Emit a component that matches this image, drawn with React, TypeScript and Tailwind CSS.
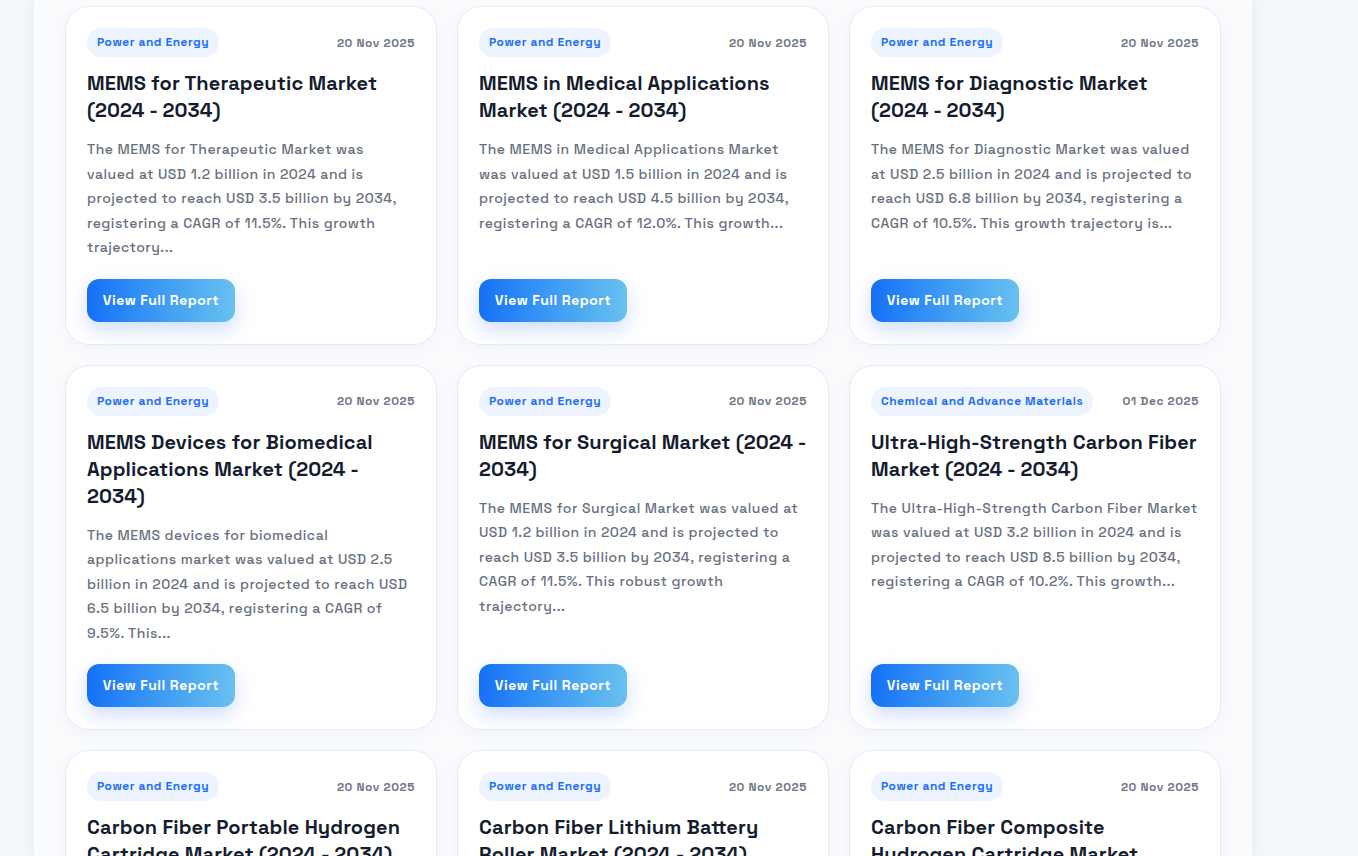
import React from "react";

type Report = {
  tag: string;
  date: string;
  title: string;
  desc: string;
};

const reports: Report[] = [
  {
    tag: "Power and Energy",
    date: "20 Nov 2025",
    title: "MEMS for Therapeutic Market (2024 - 2034)",
    desc: "The MEMS for Therapeutic Market was valued at USD 1.2 billion in 2024 and is projected to reach USD 3.5 billion by 2034, registering a CAGR of 11.5%. This growth trajectory...",
  },
  {
    tag: "Power and Energy",
    date: "20 Nov 2025",
    title: "MEMS in Medical Applications Market (2024 - 2034)",
    desc: "The MEMS in Medical Applications Market was valued at USD 1.5 billion in 2024 and is projected to reach USD 4.5 billion by 2034, registering a CAGR of 12.0%. This growth...",
  },
  {
    tag: "Power and Energy",
    date: "20 Nov 2025",
    title: "MEMS for Diagnostic Market (2024 - 2034)",
    desc: "The MEMS for Diagnostic Market was valued at USD 2.5 billion in 2024 and is projected to reach USD 6.8 billion by 2034, registering a CAGR of 10.5%. This growth trajectory is...",
  },
  {
    tag: "Power and Energy",
    date: "20 Nov 2025",
    title: "MEMS Devices for Biomedical Applications Market (2024 - 2034)",
    desc: "The MEMS devices for biomedical applications market was valued at USD 2.5 billion in 2024 and is projected to reach USD 6.5 billion by 2034, registering a CAGR of 9.5%. This...",
  },
  {
    tag: "Power and Energy",
    date: "20 Nov 2025",
    title: "MEMS for Surgical Market (2024 - 2034)",
    desc: "The MEMS for Surgical Market was valued at USD 1.2 billion in 2024 and is projected to reach USD 3.5 billion by 2034, registering a CAGR of 11.5%. This robust growth trajectory...",
  },
  {
    tag: "Chemical and Advance Materials",
    date: "01 Dec 2025",
    title: "Ultra-High-Strength Carbon Fiber Market (2024 - 2034)",
    desc: "The Ultra-High-Strength Carbon Fiber Market was valued at USD 3.2 billion in 2024 and is projected to reach USD 8.5 billion by 2034, registering a CAGR of 10.2%. This growth...",
  },
  {
    tag: "Power and Energy",
    date: "20 Nov 2025",
    title: "Carbon Fiber Portable Hydrogen Cartridge Market (2024 - 2034)",
    desc: "The Carbon Fiber Portable Hydrogen Cartridge Market was valued at USD 0.8 billion in 2024 and is projected to reach USD 2.4 billion by 2034, registering a CAGR of 11.8%. This growth...",
  },
  {
    tag: "Power and Energy",
    date: "20 Nov 2025",
    title: "Carbon Fiber Lithium Battery Roller Market (2024 - 2034)",
    desc: "The Carbon Fiber Lithium Battery Roller Market was valued at USD 0.6 billion in 2024 and is projected to reach USD 1.8 billion by 2034, registering a CAGR of 11.6%. This growth...",
  },
  {
    tag: "Power and Energy",
    date: "20 Nov 2025",
    title: "Carbon Fiber Composite Hydrogen Cartridge Market (2024 - 2034)",
    desc: "The Carbon Fiber Composite Hydrogen Cartridge Market was valued at USD 1.1 billion in 2024 and is projected to reach USD 3.2 billion by 2034, registering a CAGR of 11.3%. This growth...",
  },
];

function ReportCard({ r }: { r: Report }) {
  return (
    <div className="flex flex-col rounded-[24px] border border-[#e4ebf5] bg-white px-[21px] pt-[21px] pb-[22px] shadow-[0_4px_18px_rgba(30,60,120,0.04)]">
      <div className="flex items-center justify-between">
        <span className="rounded-full bg-[#edf4ff] px-[10px] py-[6px] text-[12px] font-semibold leading-[17px] tracking-[0.5px] text-[#1d6ff2]">
          {r.tag}
        </span>
        <span className="text-[12px] font-semibold tracking-[0.55px] text-[#6f7786]">
          {r.date}
        </span>
      </div>
      <h3 className="mt-[13px] text-[20px] font-bold leading-[27px] tracking-[0.1px] text-[#141c2e]">
        {r.title}
      </h3>
      <p className="mt-[13px] text-[14px] font-medium leading-[24.5px] tracking-[0.5px] text-[#687080]">
        {r.desc}
      </p>
      <div className="mt-auto pt-[19px]">
        <button className="h-[43px] w-[148px] rounded-[12px] bg-gradient-to-r from-[#1570f6] to-[#68c1ee] text-[14px] font-bold tracking-[0.5px] text-white shadow-[0_8px_20px_rgba(37,99,235,0.22)]">
          View Full Report
        </button>
      </div>
    </div>
  );
}

export default function App() {
  return (
    <div
      className="flex h-[856px] overflow-hidden bg-[#f3f6fa]"
      style={{ fontFamily: "'Space Grotesk', Inter, 'DejaVu Sans', sans-serif" }}
    >
      <div className="ml-[34px] w-[1218px] shrink-0 bg-[#fafbfd] px-[31px] pt-[6px] shadow-[0_0_12px_rgba(30,50,90,0.06)]">
        <div className="grid grid-cols-3 gap-[20px]">
          {reports.map((r, i) => (
            <ReportCard key={i} r={r} />
          ))}
        </div>
      </div>
    </div>
  );
}
